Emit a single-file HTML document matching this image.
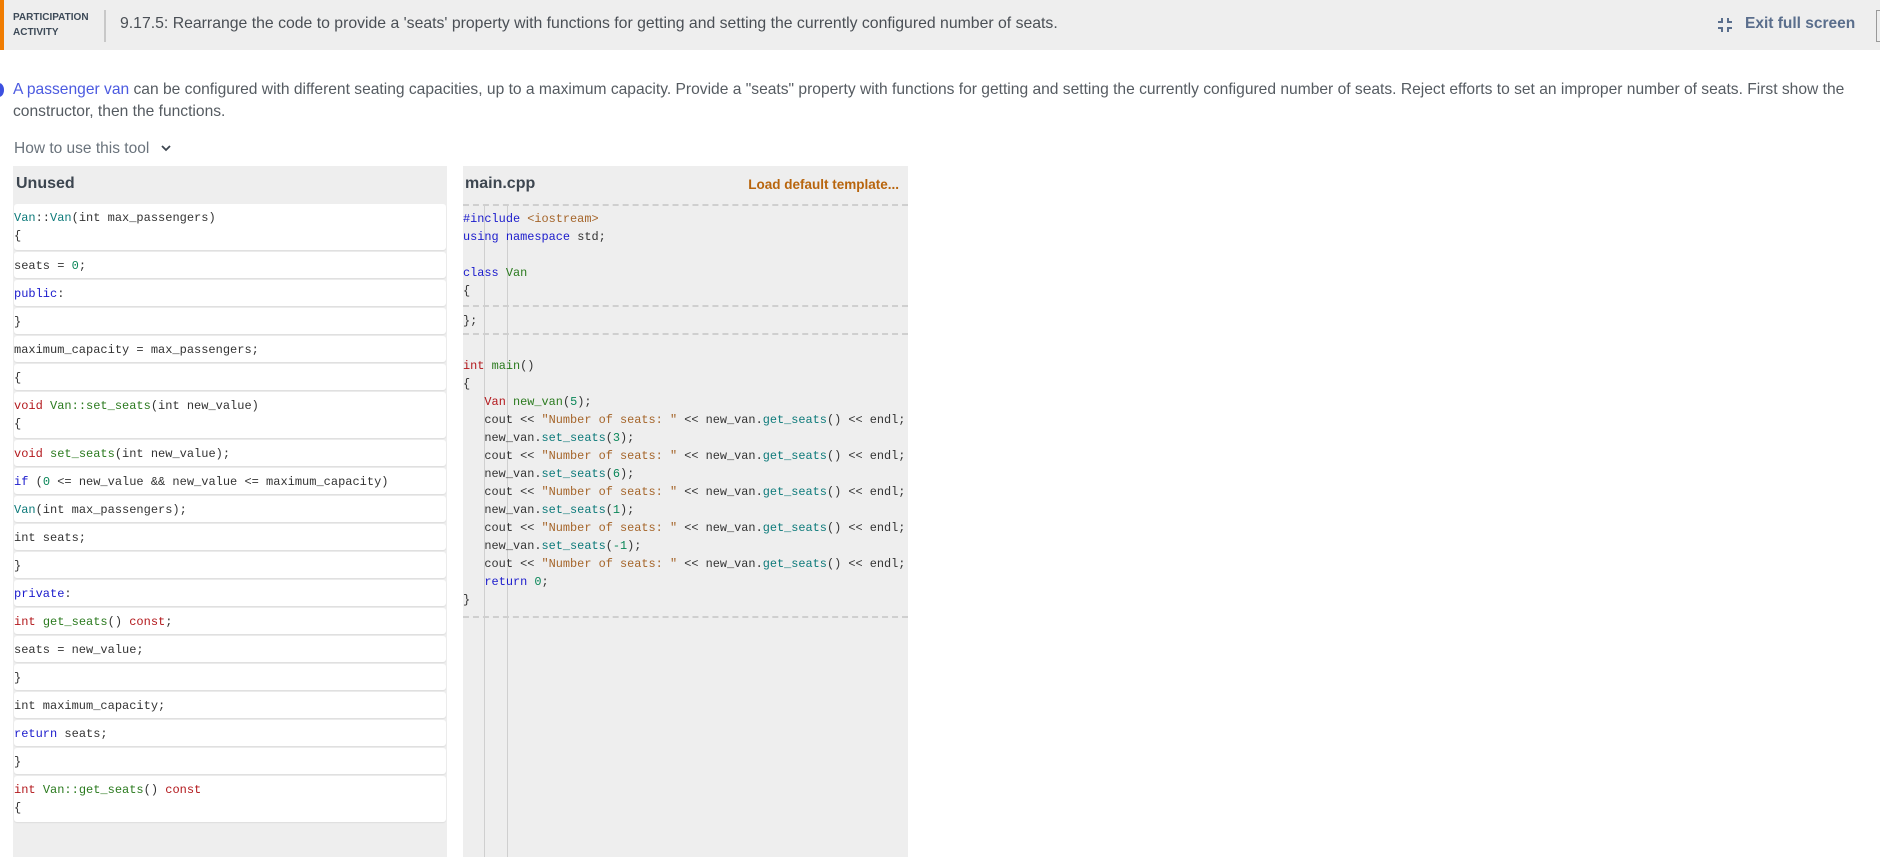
<!DOCTYPE html>
<html><head><meta charset="utf-8"><style>
*{margin:0;padding:0;box-sizing:border-box}
body{width:1880px;height:857px;overflow:hidden;background:#fff;font-family:"Liberation Sans",sans-serif;position:relative}
.hdr{position:absolute;left:0;top:0;width:1880px;height:50px;background:#eeeeee;border-left:4px solid #f07c00}
.pa{position:absolute;left:13px;top:10px;font-size:10px;font-weight:bold;color:#3d4a58;line-height:15px}
.sep{position:absolute;left:104px;top:10px;width:2px;height:32px;background:#c8c8c8}
.ttl{position:absolute;left:120px;top:15px;font-size:15.8px;color:#4a4f55}
.exit{position:absolute;left:1717px;top:15px;font-size:15.5px;font-weight:bold;color:#5a6e8c}
.box{position:absolute;left:1876px;top:10px;width:4px;height:32px;border:1px solid #999;border-right:none}
.desc{position:absolute;left:13px;top:79px;width:1866px;font-size:15.6px;line-height:22px;color:#555b61}
.desc a{color:#4b5ae0;text-decoration:none}
.dot{position:absolute;left:-6px;top:83px;width:10px;height:14px;border-radius:50%;background:#3c50e0}
.how{position:absolute;left:14px;top:140px;font-size:15.5px;color:#6a737c}
.panel{position:absolute;top:166px;height:691px;background:#eeeeee}
.ph{position:absolute;left:3px;top:9px;font-size:16px;font-weight:bold;color:#3d4650}
.card{position:absolute;left:1px;width:432px;background:#fff;border-radius:3px;box-shadow:0 1px 1px #ddd;font-family:"Liberation Mono",monospace;font-size:12px;line-height:18px;color:#333;padding:5px 0 0 0}
.k{color:#1a1acc}.r{color:#b3181c}.g{color:#2a7a1e}.t{color:#0d7a7a}.n{color:#098658}.s{color:#a5652a}
.code{position:absolute;left:0;font-family:"Liberation Mono",monospace;font-size:11.9px;line-height:18px;color:#333;white-space:pre}
.dash{position:absolute;left:0;width:445px;border-top:2px dashed #cfcfcf}
.vl{position:absolute;top:38px;width:1px;height:653px;background:#cfcfcf}
</style></head><body>
<div class="hdr"></div>
<div class="pa">PARTICIPATION<br>ACTIVITY</div>
<div class="sep"></div>
<div class="ttl">9.17.5: Rearrange the code to provide a 'seats' property with functions for getting and setting the currently configured number of seats.</div>
<svg style="position:absolute;left:1717px;top:17px" width="16" height="16" viewBox="0 0 16 16" fill="none" stroke="#5a6e8c" stroke-width="2"><path d="M1 5h4V1M11 1v4h4M1 11h4v4M11 15v-4h4"/></svg>
<div class="exit" style="left:1745px">Exit full screen</div>
<div class="box"></div>
<div class="dot"></div>
<div class="desc"><a>A passenger van</a> can be configured with different seating capacities, up to a maximum capacity. Provide a "seats" property with functions for getting and setting the currently configured number of seats. Reject efforts to set an improper number of seats. First show the constructor, then the functions.</div>
<div class="how">How to use this tool <svg width="12" height="10" viewBox="0 0 12 10" style="margin-left:6px"><path d="M2 3l4 4 4-4" stroke="#3d4650" stroke-width="1.8" fill="none"/></svg></div>

<div class="panel" style="left:13px;width:434px">
<div class="ph">Unused</div>
<div class="card" style="top:38px;height:46px"><span class="t">Van</span>::<span class="t">Van</span>(int max_passengers)<br>{</div>
<div class="card" style="top:86px;height:26px">seats = <span class="n">0</span>;</div>
<div class="card" style="top:114px;height:26px"><span class="k">public</span>:</div>
<div class="card" style="top:142px;height:26px">}</div>
<div class="card" style="top:170px;height:26px">maximum_capacity = max_passengers;</div>
<div class="card" style="top:198px;height:26px">{</div>
<div class="card" style="top:226px;height:46px"><span class="r">void</span> <span class="g">Van::set_seats</span>(int new_value)<br>{</div>
<div class="card" style="top:274px;height:26px"><span class="r">void</span> <span class="g">set_seats</span>(int new_value);</div>
<div class="card" style="top:302px;height:26px"><span class="k">if</span> (<span class="n">0</span> &lt;= new_value &amp;&amp; new_value &lt;= maximum_capacity)</div>
<div class="card" style="top:330px;height:26px"><span class="t">Van</span>(int max_passengers);</div>
<div class="card" style="top:358px;height:26px">int seats;</div>
<div class="card" style="top:386px;height:26px">}</div>
<div class="card" style="top:414px;height:26px"><span class="k">private</span>:</div>
<div class="card" style="top:442px;height:26px"><span class="r">int</span> <span class="g">get_seats</span>() <span class="r">const</span>;</div>
<div class="card" style="top:470px;height:26px">seats = new_value;</div>
<div class="card" style="top:498px;height:26px">}</div>
<div class="card" style="top:526px;height:26px">int maximum_capacity;</div>
<div class="card" style="top:554px;height:26px"><span class="k">return</span> seats;</div>
<div class="card" style="top:582px;height:26px">}</div>
<div class="card" style="top:610px;height:46px"><span class="r">int</span> <span class="g">Van::get_seats</span>() <span class="r">const</span><br>{</div>
</div>

<div class="panel" style="left:463px;width:445px">
<div class="ph" style="left:2px">main.cpp</div>
<div style="position:absolute;right:9px;top:11px;font-size:13.5px;font-weight:bold;color:#b8650d">Load default template...</div>
<div class="vl" style="left:21px"></div>
<div class="vl" style="left:44px"></div>
<div class="dash" style="top:38px"></div>
<div class="code" style="top:44px"><span class="k">#include</span> <span class="s">&lt;iostream&gt;</span>
<span class="k">using</span> <span class="k">namespace</span> std;

<span class="k">class</span> <span class="g">Van</span>
{</div>
<div class="dash" style="top:139px"></div>
<div class="code" style="top:146px">};</div>
<div class="dash" style="top:167px"></div>
<div class="code" style="top:191px"><span class="r">int</span> <span class="g">main</span>()
{
   <span class="r">Van</span> <span class="g">new_van</span>(<span class="n">5</span>);
   cout &lt;&lt; <span class="s">"Number of seats: "</span> &lt;&lt; new_van.<span class="t">get_seats</span>() &lt;&lt; endl;
   new_van.<span class="t">set_seats</span>(<span class="n">3</span>);
   cout &lt;&lt; <span class="s">"Number of seats: "</span> &lt;&lt; new_van.<span class="t">get_seats</span>() &lt;&lt; endl;
   new_van.<span class="t">set_seats</span>(<span class="n">6</span>);
   cout &lt;&lt; <span class="s">"Number of seats: "</span> &lt;&lt; new_van.<span class="t">get_seats</span>() &lt;&lt; endl;
   new_van.<span class="t">set_seats</span>(<span class="n">1</span>);
   cout &lt;&lt; <span class="s">"Number of seats: "</span> &lt;&lt; new_van.<span class="t">get_seats</span>() &lt;&lt; endl;
   new_van.<span class="t">set_seats</span>(<span class="n">-1</span>);
   cout &lt;&lt; <span class="s">"Number of seats: "</span> &lt;&lt; new_van.<span class="t">get_seats</span>() &lt;&lt; endl;
   <span class="k">return</span> <span class="n">0</span>;
}</div>
<div class="dash" style="top:450px"></div>
</div>
</body></html>
